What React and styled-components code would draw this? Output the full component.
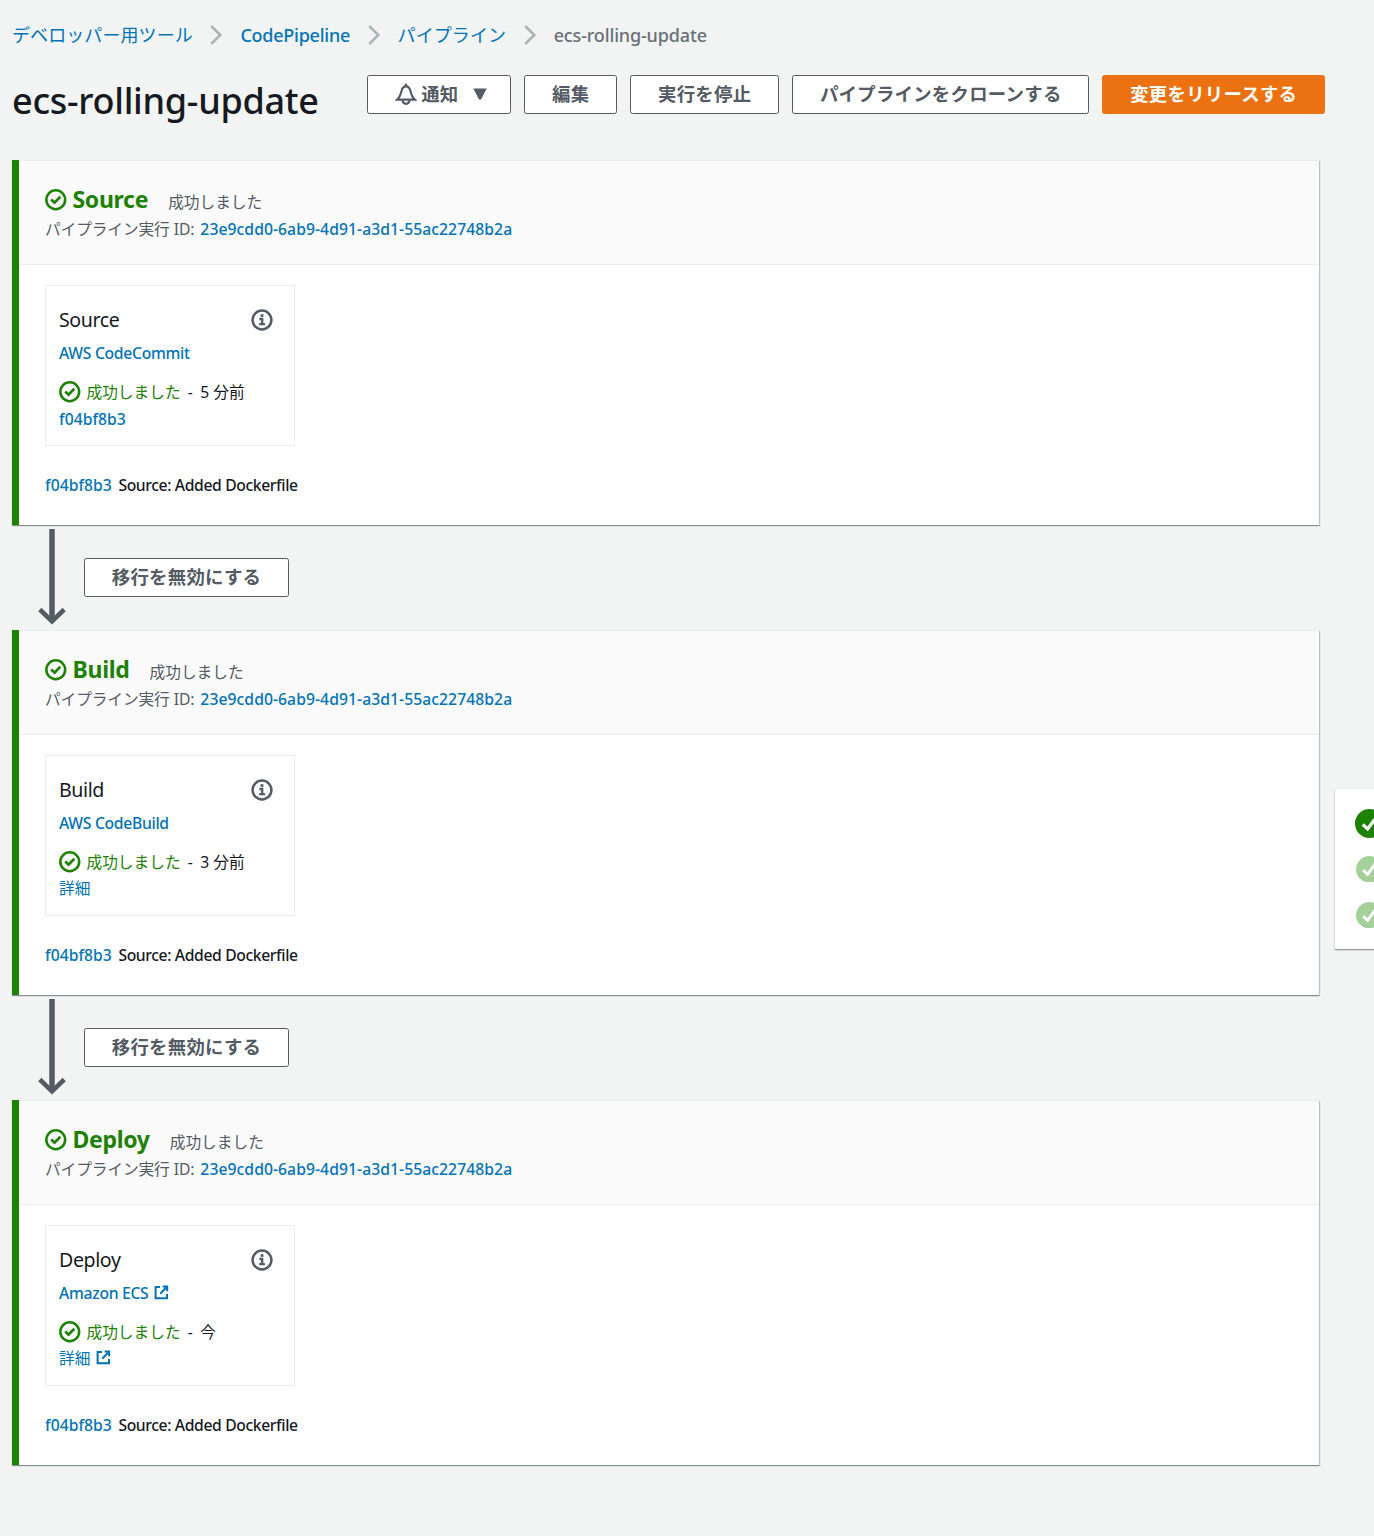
import React from 'react';
import styled, { createGlobalStyle } from 'styled-components';

const COLORS = {
  bg: '#f2f3f3',
  text: '#16191f',
  secondary: '#545b64',
  muted: '#687078',
  link: '#0073bb',
  success: '#1d8102',
  successLight: '#a5d099',
  border: '#eaeded',
  separator: '#aab7b8',
  primary: '#ec7211',
};

const GlobalStyle = createGlobalStyle`
  * {
    box-sizing: border-box;
  }

  body {
    margin: 0;
    background: ${COLORS.bg};
    color: ${COLORS.text};
    font-family: 'Noto Sans', 'Noto Sans CJK JP', sans-serif;
    font-size: 15.7px;
    overflow: hidden;
  }
`;

const Page = styled.div`
  min-height: 1536px;
  padding: 20px 49px 0 12px;
`;

const Breadcrumbs = styled.nav`
  display: flex;
  align-items: center;
  height: 30px;
  font-size: 18px;
  white-space: nowrap;
`;

const Crumb = styled.a`
  padding-bottom: ${({ $latin }) => ($latin ? 0 : 2)}px;
  color: ${({ $current }) => ($current ? COLORS.muted : COLORS.link)};
  font-weight: ${({ $latin }) => ($latin ? 500 : 400)};
  letter-spacing: ${({ $spacing }) => $spacing || '0.08px'};
`;

const CrumbArrow = styled.svg`
  width: 14px;
  height: 20px;
  margin: 0 17px 0 16.6px;
  flex: none;
`;

const PageHeader = styled.header`
  display: flex;
  justify-content: space-between;
  height: 110px;
  padding-top: 25px;
`;

const PageTitle = styled.h1`
  margin: 6px 0 0;
  font-size: 36px;
  line-height: 40px;
  font-weight: 500;
  letter-spacing: -0.28px;
  white-space: nowrap;
`;

const Toolbar = styled.div`
  display: flex;
  gap: 13px;
`;

const Button = styled.button`
  display: flex;
  align-items: center;
  height: 39px;
  padding: 0 26.8px 2px;
  border: 1.4px solid ${({ $primary }) => ($primary ? COLORS.primary : COLORS.secondary)};
  border-radius: 2.5px;
  background: ${({ $primary }) => ($primary ? COLORS.primary : '#fff')};
  color: ${({ $primary }) => ($primary ? '#fff' : COLORS.secondary)};
  font-family: 'Noto Sans', 'Noto Sans CJK JP', sans-serif;
  font-size: 18.4px;
  font-weight: 700;
  letter-spacing: 0.27px;
  line-height: 35px;
  white-space: nowrap;
`;

const BellIcon = styled.svg`
  width: 22px;
  height: 22px;
  margin-right: 4.5px;
`;

const Caret = styled.svg`
  width: 14px;
  height: 12px;
  margin: 1px -4px 0 15px;
`;

const StageCard = styled.section`
  width: 1307px;
  height: 365px;
  border-left: 7px solid ${COLORS.success};
  background: #fff;
  box-shadow: 0 1px 1px rgba(0, 28, 36, 0.35), 1px 1px 1px rgba(0, 28, 36, 0.18);
`;

const StageHeader = styled.div`
  height: 105px;
  padding: 24px 26px 0;
  background: #fafafa;
  border-top: 1px solid ${COLORS.border};
  border-bottom: 1px solid ${COLORS.border};
`;

const StageTitleRow = styled.div`
  display: flex;
  align-items: center;
  height: 30px;
`;

const StageTitle = styled.h2`
  margin: -2px 20px 0 6px;
  color: ${COLORS.success};
  font-size: 23px;
  line-height: 30px;
  font-weight: 700;
  letter-spacing: -0.3px;
`;

const StageStatus = styled.span`
  padding-top: 2px;
  color: ${COLORS.secondary};
`;

const ExecutionRow = styled.div`
  display: flex;
  gap: 6px;
  line-height: 28px;
  color: ${COLORS.secondary};
`;

const ExecutionLabel = styled.span`
  letter-spacing: -0.1px;
`;

const Link = styled.a`
  color: ${COLORS.link};
  font-weight: 500;
  letter-spacing: ${({ $spacing }) => $spacing || '0.03px'};
`;

const JaLink = styled(Link)`
  padding-bottom: 2px;
  font-weight: 400;
`;

const StageBody = styled.div`
  padding: 20px 26px 0;
`;

const ActionCard = styled.div`
  width: 250px;
  height: 161px;
  padding: 18px 21.5px 0 13px;
  border: 1.5px solid ${COLORS.border};
`;

const ActionTitle = styled.div`
  display: flex;
  justify-content: space-between;
  align-items: center;
  height: 32px;
  font-size: 19.6px;
  font-weight: 400;
  letter-spacing: -0.4px;
  line-height: 32px;
`;

const ActionRow = styled.div`
  display: flex;
  align-items: center;
  height: ${({ $height }) => $height}px;
  line-height: 26px;
  white-space: pre;
`;

const StatusText = styled.span`
  margin: 0 7px 0 6px;
  color: ${COLORS.success};
`;

const StatusTime = styled.span`
  display: flex;
  gap: 7.5px;
  font-weight: ${({ $latin }) => ($latin ? 500 : 400)};
`;

const CommitRow = styled.div`
  display: flex;
  gap: 6.6px;
  margin-top: 25px;
  line-height: 28px;
`;

const CommitMessage = styled.span`
  font-weight: 500;
  letter-spacing: -0.37px;
`;

const Transition = styled.div`
  display: flex;
  height: 105px;
  padding: 4px 0 0 26px;
`;

const ArrowDown = styled.svg`
  width: 28px;
  height: 96px;
  margin-right: 18px;
`;

const TransitionAction = styled.div`
  padding-top: 29px;
`;

const ExternalSvg = styled.svg`
  width: 15px;
  height: 15px;
  margin: 0 0 2px 6px;
`;

// Floating stage overview, runs off the right edge of the window
const StageNav = styled.aside`
  position: fixed;
  top: 789px;
  left: 1335px;
  width: 70px;
  height: 160px;
  padding: 19.7px 0 0 20px;
  background: #fff;
  box-shadow: 0 1px 1px rgba(0, 28, 36, 0.3), 0 1px 2px rgba(0, 28, 36, 0.2);
`;

const StageDot = styled.svg`
  display: block;
  width: ${({ $size }) => $size}px;
  height: ${({ $size }) => $size}px;
  margin: 0 0 ${({ $gap }) => $gap}px ${({ $inset }) => $inset || 0}px;
`;

const stages = [
  {
    name: 'Source',
    provider: 'AWS CodeCommit',
    time: '5 分前',
    detail: 'f04bf8b3',
  },
  {
    name: 'Build',
    provider: 'AWS CodeBuild',
    time: '3 分前',
    detail: '詳細',
  },
  {
    name: 'Deploy',
    provider: 'Amazon ECS',
    time: '今',
    detail: '詳細',
    external: true,
  },
];

const Separator = () => (
  <CrumbArrow viewBox="0 0 14 20" fill="none" stroke={COLORS.separator} strokeWidth="2.6">
    <path d="M2.2 1 L11.3 10 L2.2 19" />
  </CrumbArrow>
);

const CheckIcon = () => (
  <svg width="21.5" height="21.5" viewBox="0 0 16 16" fill="none" stroke={COLORS.success}>
    <circle cx="8" cy="8" r="7" strokeWidth="1.9" />
    <path d="M4.6 7.8 L7.1 10.2 L11.4 5.8" strokeWidth="2" />
  </svg>
);

const InfoIcon = () => (
  <svg width="22" height="22" viewBox="0 0 22 22" fill="none" stroke={COLORS.secondary}>
    <circle cx="11" cy="11" r="9.4" strokeWidth="2.5" />
    <path d="M11 5.2 V7.9" strokeWidth="2.8" />
    <path d="M8.4 10 H11.2 V15.2 M8.2 15.2 H13.9" strokeWidth="2.3" />
  </svg>
);

const ExternalIcon = () => (
  <ExternalSvg viewBox="0 0 15 15" fill="none" stroke={COLORS.link} strokeWidth="2">
    <path d="M6 2 H1.6 V13.2 H13 V9" />
    <path d="M8.6 1.6 H13.2 V6.2 M13 1.8 L6.2 8.7" />
  </ExternalSvg>
);

const Dot = ({ size, gap, inset, color }) => (
  <StageDot $size={size} $gap={gap} $inset={inset} viewBox="0 0 28 28">
    <circle cx="14" cy="14" r="14" fill={color} />
    <path d="M7.5 15 L12.2 19.3 L20.3 8.4" fill="none" stroke="#fff" strokeWidth="3.1" />
  </StageDot>
);

const Stage = ({ stage }) => (
  <StageCard>
    <StageHeader>
      <StageTitleRow>
        <CheckIcon />
        <StageTitle>{stage.name}</StageTitle>
        <StageStatus>成功しました</StageStatus>
      </StageTitleRow>
      <ExecutionRow>
        <ExecutionLabel>パイプライン実行 ID:</ExecutionLabel>
        <Link $spacing="0.07px">23e9cdd0-6ab9-4d91-a3d1-55ac22748b2a</Link>
      </ExecutionRow>
    </StageHeader>
    <StageBody>
      <ActionCard>
        <ActionTitle>
          {stage.name}
          <InfoIcon />
        </ActionTitle>
        <ActionRow $height={34}>
          <Link $spacing="-0.3px">{stage.provider}</Link>
          {stage.external && <ExternalIcon />}
        </ActionRow>
        <ActionRow $height={44}>
          <CheckIcon />
          <StatusText>成功しました</StatusText>
          <StatusTime>
            <span>-</span>
            <span>{stage.time}</span>
          </StatusTime>
        </ActionRow>
        <ActionRow $height={9}>
          {stage.detail === '詳細' ? <JaLink>{stage.detail}</JaLink> : <Link>{stage.detail}</Link>}
          {stage.external && <ExternalIcon />}
        </ActionRow>
      </ActionCard>
      <CommitRow>
        <Link>f04bf8b3</Link>
        <CommitMessage>Source: Added Dockerfile</CommitMessage>
      </CommitRow>
    </StageBody>
  </StageCard>
);

const StageTransition = () => (
  <Transition>
    <ArrowDown viewBox="0 0 28 96" fill="none" stroke={COLORS.secondary}>
      <path d="M14 0 V92" strokeWidth="5.5" />
      <path d="M1.8 80.5 L14 92.3 L26.2 80.5" strokeWidth="4.6" />
    </ArrowDown>
    <TransitionAction>
      <Button>移行を無効にする</Button>
    </TransitionAction>
  </Transition>
);

const App = () => {
  return (
    <>
      <GlobalStyle />
      <Page>
        <Breadcrumbs>
          <Crumb>デベロッパー用ツール</Crumb>
          <Separator />
          <Crumb $latin $spacing="-0.25px">CodePipeline</Crumb>
          <Separator />
          <Crumb>パイプライン</Crumb>
          <Separator />
          <Crumb $current $latin $spacing="-0.15px">ecs-rolling-update</Crumb>
        </Breadcrumbs>
        <PageHeader>
          <PageTitle>ecs-rolling-update</PageTitle>
          <Toolbar>
            <Button>
              <BellIcon viewBox="0 0 22 22" fill="none" stroke={COLORS.secondary} strokeWidth="2.2">
                <path d="M11 0.6 V3.5" />
                <path d="M2.2 16.6 C5 14.4 5.6 11.6 6.4 8.4 C7.2 5.2 8.6 3.4 11 3.4 C13.4 3.4 14.8 5.2 15.6 8.4 C16.4 11.6 17 14.4 19.8 16.6 Z" />
                <path d="M7.6 17.4 C8 21.9 14 21.9 14.4 17.4" />
              </BellIcon>
              通知
              <Caret viewBox="0 0 14 12">
                <path d="M0.3 0.5 H13.7 L8 11.5 H6 Z" fill={COLORS.secondary} />
              </Caret>
            </Button>
            <Button>編集</Button>
            <Button>実行を停止</Button>
            <Button>パイプラインをクローンする</Button>
            <Button $primary>変更をリリースする</Button>
          </Toolbar>
        </PageHeader>
        {stages.map((stage, index) => (
          <React.Fragment key={stage.name}>
            {index > 0 && <StageTransition />}
            <Stage stage={stage} />
          </React.Fragment>
        ))}
      </Page>
      <StageNav>
        <Dot size={29} gap={18} color={COLORS.success} />
        <Dot size={26.5} gap={19.5} inset={1} color={COLORS.successLight} />
        <Dot size={26.5} gap={0} inset={1} color={COLORS.successLight} />
      </StageNav>
    </>
  );
};

export default App;
